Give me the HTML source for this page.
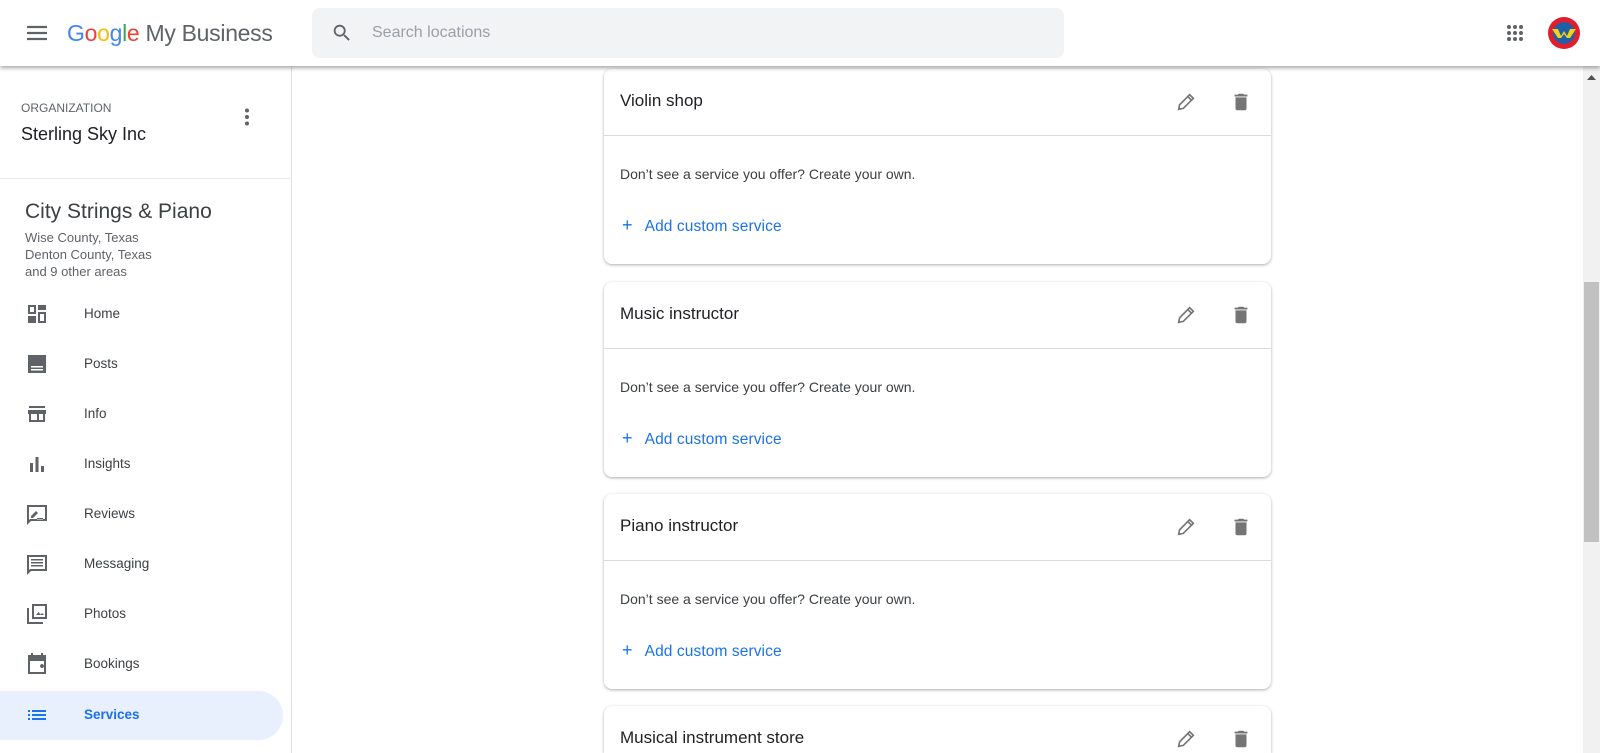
<!DOCTYPE html>
<html style="overflow:hidden"><head><meta charset="utf-8">
<style>
*{margin:0;padding:0;box-sizing:border-box}
html,body{width:1600px;height:753px;overflow:hidden}
body{background:#fff;font-family:"Liberation Sans",Arial,sans-serif;position:relative;color:#202124}
.hdr{position:absolute;left:0;top:0;width:1600px;height:66px;background:#fff;box-shadow:0 2px 4px rgba(0,0,0,.35);z-index:5}
.side{position:absolute;left:0;top:66px;width:292px;height:687px;border-right:1px solid #e0e0e0;background:#fff}
.nav{position:absolute;left:0;width:283px;height:49px}
.nav svg{position:absolute;left:25px;top:12px}
.nav span{position:absolute;left:84px;top:16px;font-size:13.5px;color:#3c4043}
.nav.act{background:#e8f0fe;border-radius:0 25px 25px 0}
.nav.act span{color:#1a73e8;font-weight:bold}
.card{position:absolute;left:604px;width:667px;height:195px;background:#fff;border-radius:8px;box-shadow:0 1px 3px rgba(60,64,67,.3),0 1px 2px rgba(60,64,67,.15)}
.card .t{position:absolute;left:16px;top:22px;font-size:17px;color:#202124}
.card .ln{position:absolute;left:0;right:0;top:66px;border-top:1px solid #dadce0}
.card .d{position:absolute;left:16px;top:97px;font-size:14px;color:#3c4043}
.card .a{position:absolute;left:18px;top:146px;font-size:15.5px;color:#1a73e8;letter-spacing:.1px}
.card .a b{font-weight:normal;font-size:18px;margin-right:12px;position:relative;top:0}
.card .ic1{position:absolute;left:571px;top:22px}
.card .ic2{position:absolute;left:626px;top:22px}
</style></head><body>
<div class="hdr">
<svg style="position:absolute;left:26px;top:24px" width="22" height="18" viewBox="0 0 22 18"><path d="M1 3h20M1 9h20M1 15h20" stroke="#5f6368" stroke-width="2.2"/></svg>
<div style="position:absolute;left:67px;top:20px;font-size:23px;letter-spacing:-.3px"><span style="color:#4285f4">G</span><span style="color:#ea4335">o</span><span style="color:#fbbc05">o</span><span style="color:#4285f4">g</span><span style="color:#34a853">l</span><span style="color:#ea4335">e</span><span style="color:#5f6368"> My Business</span></div>
<div style="position:absolute;left:312px;top:8px;width:752px;height:50px;background:#f1f3f4;border-radius:8px">
<svg style="position:absolute;left:19px;top:14px" width="22" height="22" viewBox="0 0 24 24"><path fill="#5f6368" d="M15.5 14h-.79l-.28-.27A6.470 6.470 0 0 0 16 9.5 6.5 6.5 0 1 0 9.5 16c1.61 0 3.09-.59 4.230-1.57l.27.28v.79l5 4.99L20.49 19l-4.99-5zm-6 0C7.01 14 5 11.99 5 9.5S7.01 5 9.5 5 14 7.01 14 9.5 11.99 14 9.5 14z"/></svg>
<div style="position:absolute;left:60px;top:16px;font-size:16px;color:#9aa0a6">Search locations</div></div>
<svg style="position:absolute;left:1506px;top:24px" width="18" height="18" viewBox="0 0 18 18" fill="#5f6368"><circle cx="3" cy="3" r="2"/><circle cx="9" cy="3" r="2"/><circle cx="15" cy="3" r="2"/><circle cx="3" cy="9" r="2"/><circle cx="9" cy="9" r="2"/><circle cx="15" cy="9" r="2"/><circle cx="3" cy="15" r="2"/><circle cx="9" cy="15" r="2"/><circle cx="15" cy="15" r="2"/></svg>
<svg style="position:absolute;left:1548px;top:17px" width="32" height="32" viewBox="0 0 32 32"><circle cx="16" cy="16" r="16" fill="#e11d2e"/><circle cx="16" cy="16" r="11" fill="#1f5fa8"/><path d="M4 12l6 0 3 7 3-5 3 5 3-7 6 0-6 9h-3l-3-4-3 4h-3z" fill="#f3d21b"/></svg>
</div>
<div class="side">
<div style="position:absolute;left:21px;top:35px;font-size:12px;color:#5f6368">ORGANIZATION</div>
<div style="position:absolute;left:21px;top:58px;font-size:18px;color:#202124">Sterling Sky Inc</div>
<svg style="position:absolute;left:244px;top:42px" width="6" height="18" viewBox="0 0 6 18" fill="#5f6368"><circle cx="3" cy="2.5" r="2"/><circle cx="3" cy="9" r="2"/><circle cx="3" cy="15.5" r="2"/></svg>
<div style="position:absolute;left:0;top:112px;width:292px;border-top:1px solid #e8eaed"></div>
<div style="position:absolute;left:25px;top:134px;font-size:21px;color:#3c4043">City Strings &amp; Piano</div>
<div style="position:absolute;left:25px;top:163px;font-size:13px;color:#5f6368;line-height:17px">Wise County, Texas<br>Denton County, Texas<br>and 9 other areas</div>
<div class="nav" style="top:224px"><svg width="24" height="24" viewBox="0 0 24 24" fill="#5f6368"><path d="M3 3h8v9H3zm2 2v5h4V5zM13 3h8v5h-8zM3 14h8v7H3zM13 10h8v11h-8zm2 2v7h4v-7z"/></svg><span>Home</span></div>
<div class="nav" style="top:274px"><svg width="24" height="24" viewBox="0 0 24 24" fill="#5f6368"><path d="M3 3h18v18H3zM6 14h12v1.5H6zm0 3h12v1.5H6z" fill-rule="evenodd"/></svg><span>Posts</span></div>
<div class="nav" style="top:324px"><svg width="24" height="24" viewBox="0 0 24 24" fill="#5f6368"><path d="M4 4h16v2H4zm-1 4h18v4h-1v8H4v-8H3zm3 4v6h6v-6zm8 0v6h4v-6z" fill-rule="evenodd"/></svg><span>Info</span></div>
<div class="nav" style="top:374px"><svg width="24" height="24" viewBox="0 0 24 24" fill="#5f6368"><path d="M5 11h3v9H5zm5.5-6h3v15h-3zM16 14h3v6h-3z"/></svg><span>Insights</span></div>
<div class="nav" style="top:424px"><svg width="24" height="24" viewBox="0 0 24 24" fill="#5f6368"><path d="M2 3h20v16H6l-4 4zm2 2v13l1-1h15V5zm2 9l5-5 2 2-5 5H6zm6 2h6v1.5h-6z" fill-rule="evenodd"/></svg><span>Reviews</span></div>
<div class="nav" style="top:474px"><svg width="24" height="24" viewBox="0 0 24 24" fill="#5f6368"><path d="M2 3h20v16H6l-4 4zm2 2v13l1-1h15V5zM6 7h12v1.5H6zm0 3h12v1.5H6zm0 3h12v1.5H6z" fill-rule="evenodd"/></svg><span>Messaging</span></div>
<div class="nav" style="top:524px"><svg width="24" height="24" viewBox="0 0 24 24" fill="#5f6368"><path d="M7 2h15v15H7zm2 2v11h11V4zM2 6h2v14h14v2H2zm9 7l2.5-3 2 2.5 1.5-1.5 2 2z" fill-rule="evenodd"/></svg><span>Photos</span></div>
<div class="nav" style="top:574px"><svg width="24" height="24" viewBox="0 0 24 24" fill="#5f6368"><path d="M6 1h2v2h8V1h2v2h3v19H3V3h3zM5 9v11h14V9zm10 5a2 2 0 1 1 0 .01z" fill-rule="evenodd"/></svg><span>Bookings</span></div>
<div class="nav act" style="top:625px"><svg width="24" height="24" viewBox="0 0 24 24" fill="#1a73e8"><path d="M3 7h2v2H3zm4 0h14v2H7zM3 11h2v2H3zm4 0h14v2H7zM3 15h2v2H3zm4 0h14v2H7z"/></svg><span>Services</span></div>
</div>
<div style="position:absolute;left:1583px;top:66px;width:17px;height:687px;background:#f1f1f1"></div>
<div style="position:absolute;left:1584px;top:282px;width:15px;height:260px;background:#c1c1c1"></div>
<svg style="position:absolute;left:1587px;top:74px" width="9" height="6"><path d="M0 6L4.5 1 9 6z" fill="#505050"/></svg>

<div class="card" style="top:69px"><div class="t">Violin shop</div><svg class="ic1" width="22" height="22" viewBox="0 0 24 24"><path d="M4 20l1-5L16 4l4 4L9 19zM14 6l4 4" fill="none" stroke="#757575" stroke-width="1.8"/></svg><svg class="ic2" width="22" height="22" viewBox="0 0 24 24" fill="#757575"><path d="M6 19a2 2 0 0 0 2 2h8a2 2 0 0 0 2-2V7H6zM19 4h-3.5l-1-1h-5l-1 1H5v2h14z"/></svg><div class="ln"></div><div class="d">Don’t see a service you offer? Create your own.</div><div class="a"><b>+</b>Add custom service</div></div>
<div class="card" style="top:282px"><div class="t">Music instructor</div><svg class="ic1" width="22" height="22" viewBox="0 0 24 24"><path d="M4 20l1-5L16 4l4 4L9 19zM14 6l4 4" fill="none" stroke="#757575" stroke-width="1.8"/></svg><svg class="ic2" width="22" height="22" viewBox="0 0 24 24" fill="#757575"><path d="M6 19a2 2 0 0 0 2 2h8a2 2 0 0 0 2-2V7H6zM19 4h-3.5l-1-1h-5l-1 1H5v2h14z"/></svg><div class="ln"></div><div class="d">Don’t see a service you offer? Create your own.</div><div class="a"><b>+</b>Add custom service</div></div>
<div class="card" style="top:494px"><div class="t">Piano instructor</div><svg class="ic1" width="22" height="22" viewBox="0 0 24 24"><path d="M4 20l1-5L16 4l4 4L9 19zM14 6l4 4" fill="none" stroke="#757575" stroke-width="1.8"/></svg><svg class="ic2" width="22" height="22" viewBox="0 0 24 24" fill="#757575"><path d="M6 19a2 2 0 0 0 2 2h8a2 2 0 0 0 2-2V7H6zM19 4h-3.5l-1-1h-5l-1 1H5v2h14z"/></svg><div class="ln"></div><div class="d">Don’t see a service you offer? Create your own.</div><div class="a"><b>+</b>Add custom service</div></div>
<div class="card" style="top:706px;height:47px;border-radius:8px 8px 0 0"><div class="t">Musical instrument store</div><svg class="ic1" width="22" height="22" viewBox="0 0 24 24"><path d="M4 20l1-5L16 4l4 4L9 19zM14 6l4 4" fill="none" stroke="#757575" stroke-width="1.8"/></svg><svg class="ic2" width="22" height="22" viewBox="0 0 24 24" fill="#757575"><path d="M6 19a2 2 0 0 0 2 2h8a2 2 0 0 0 2-2V7H6zM19 4h-3.5l-1-1h-5l-1 1H5v2h14z"/></svg></div>
</body></html>
